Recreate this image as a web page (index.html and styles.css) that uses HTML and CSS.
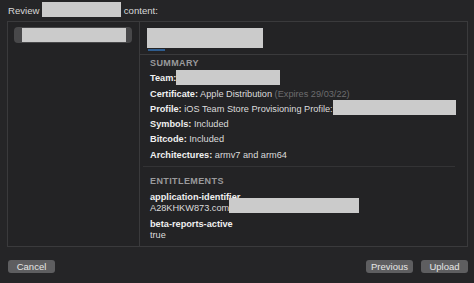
FILE: index.html
```html
<!DOCTYPE html>
<html lang="en">
<head>
  <meta charset="UTF-8">
  <meta name="viewport" content="width=device-width, initial-scale=1.0">
  <title>Review content</title>
  <link rel="stylesheet" href="styles.css">
</head>
<body>
  <div class="title">Review <span class="redact title-redact"></span> content:</div>

  <div class="frame">
    <div class="sidebar">
      <div class="item"><span class="redact item-redact"></span></div>
    </div>

    <div class="main">
      <div class="main-head">
        <span class="redact head-redact"></span>
        <span class="icon-hint"></span>
      </div>

      <div class="main-body">
        <div class="section">
          <h2>SUMMARY</h2>
          <p><b>Team:</b><span class="redact team-redact"></span></p>
          <p><b>Certificate:</b> Apple Distribution <span class="muted">(Expires 29/03/22)</span></p>
          <p><b>Profile:</b> iOS Team Store Provisioning Profile:<span class="redact profile-redact"></span></p>
          <p><b>Symbols:</b> Included</p>
          <p><b>Bitcode:</b> Included</p>
          <p><b>Architectures:</b> armv7 and arm64</p>
        </div>

        <div class="section entitlements">
          <h2>ENTITLEMENTS</h2>
          <div class="entry">
            <b>application-identifier</b>
            <span>A28KHKW873.com<span class="redact app-redact"></span></span>
          </div>
          <div class="entry">
            <b>beta-reports-active</b>
            <span>true</span>
          </div>
        </div>
      </div>
    </div>
  </div>

  <div class="footer">
    <button>Cancel</button>
    <div class="spacer"></div>
    <button>Previous</button>
    <button>Upload</button>
  </div>
</body>
</html>
```

FILE: styles.css
```css
/* Fenêtre sombre */
body {
  margin: 0;
  padding: 0;
  background-color: #252527;
  color: #dcdcdc;
  font-family: "Liberation Sans", Arial, sans-serif;
  font-size: 9.2px;
  width: 474px;
  height: 283px;
  overflow: hidden;
}

.redact {
  display: inline-block;
  background: #cbcbcb;
  vertical-align: middle;
}

.title {
  height: 21px;
  padding-left: 8px;
  line-height: 21px;
  font-size: 9.6px;
  color: #d8d8d8;
}

.title-redact {
  width: 79px;
  height: 15px;
  margin: -3px 0 0 0;
}

.frame {
  display: flex;
  margin: 0 6px 0 7px;
  height: 224px;
  border: 1px solid #3a3a3c;
  background: #232325;
}

.sidebar {
  flex-shrink: 0;
  width: 131px;
  border-right: 1px solid #3a3a3c;
  padding-top: 5px;
}

.item {
  display: flex;
  align-items: center;
  margin: 0 7px 0 6px;
  height: 16px;
  padding-left: 8px;
  background: #48484a;
  border-radius: 4px;
}

.item-redact {
  width: 104px;
  height: 14px;
}

.main {
  flex: 1;
  min-width: 0;
  display: flex;
  flex-direction: column;
}

.main-head {
  position: relative;
  height: 34px;
  border-bottom: 1px solid #3a3a3c;
  padding: 6px 0 0 7px;
  box-sizing: border-box;
}

.head-redact {
  width: 116px;
  height: 20px;
}

.icon-hint {
  position: absolute;
  left: 8px;
  top: 27px;
  width: 17px;
  height: 2px;
  background: #2f5d8f;
}

.main-body {
  padding: 3px 0 0 0;
}

.section {
  padding: 0 12px 0 10px;
}

.section h2 {
  margin: 0 0 3px;
  font-size: 9px;
  font-weight: bold;
  color: #9a9a9c;
  letter-spacing: 0.4px;
}

.section p {
  margin: 0;
  height: 15.3px;
  line-height: 15.3px;
  white-space: nowrap;
}

.section b {
  color: #f0f0f0;
}

.muted {
  color: #6c6c6e;
}

.team-redact {
  width: 104px;
  height: 15px;
  margin-top: -3px;
}

.profile-redact {
  width: 123px;
  height: 15px;
  margin-top: -3px;
}

.entitlements {
  margin: 3px 12px 0 3px;
  padding: 9px 0 0 7px;
  border-top: 1px solid #333335;
}

.entitlements h2 {
  margin-bottom: 6px;
}

.entry {
  display: flex;
  flex-direction: column;
  line-height: 11px;
  margin-bottom: 5px;
}

.app-redact {
  width: 130px;
  height: 15px;
  margin-top: -7px;
}

.footer {
  display: flex;
  gap: 8px;
  padding: 13px 6px 0 8px;
}

.spacer {
  flex: 1;
}

button {
  width: 47px;
  height: 13px;
  padding: 0;
  border: none;
  border-radius: 3px;
  background: #5e5e60;
  color: #e6e6e6;
  font-family: "Liberation Sans", Arial, sans-serif;
  font-size: 9.5px;
  line-height: 13px;
}
```
